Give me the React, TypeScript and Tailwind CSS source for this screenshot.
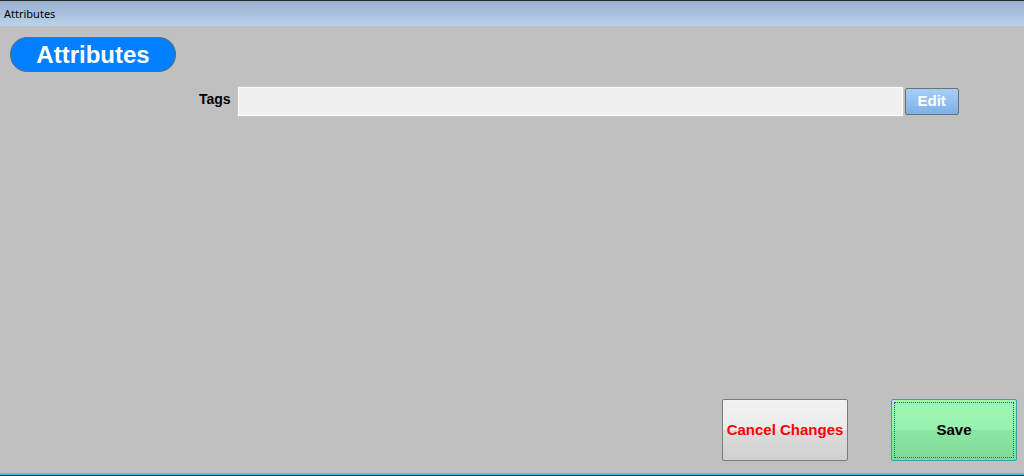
export default function App() {
  return (
    <div className="w-[1024px] h-[476px] flex flex-col bg-[#c0c0c0] font-['Liberation_Sans',Arial,sans-serif] overflow-hidden">
      <div className="h-[26px] shrink-0 border-t border-[#2a2a2a] bg-gradient-to-b from-[#98b0cf] to-[#bcd3ed] flex items-center pl-[4px]">
        <span className="text-[11px] text-black font-['Noto_Sans',sans-serif] leading-none">Attributes</span>
      </div>

      <div className="flex-1 flex flex-col">
        <div className="pt-[11px] pl-[10px]">
          <div className="w-[166px] h-[35px] rounded-[17px] border border-[#6a6a6a] bg-[#0080ff] flex items-center justify-center">
            <span className="text-white font-bold text-[24px] leading-none">Attributes</span>
          </div>
        </div>

        <div className="flex items-center mt-[15px] pl-[199px]">
          <span className="text-[14px] font-bold text-black mr-[7px] -mt-[4px]">Tags</span>
          <div className="w-[665px] h-[29px] bg-[#f0f0f0] border border-[#fbfbfb] shadow-[0_0_0_1px_#c8c8c8]" />
          <button className="ml-[2px] w-[54px] h-[27px] rounded-[2px] border border-[#707070] bg-gradient-to-b from-[#a6d0fa] to-[#7eb0e6] text-white font-bold text-[15px] flex items-center justify-center">
            Edit
          </button>
        </div>

        <div className="flex-1" />

        <div className="flex justify-end pr-[7px] pb-[12px] gap-[43px]">
          <button className="w-[126px] h-[62px] rounded-[2px] border border-[#7a7a7a] bg-[linear-gradient(to_bottom,#f2f2f2_0%,#ebebeb_50%,#dddddd_50%,#d0d0d0_100%)] text-[#ff0000] font-bold text-[15px] flex items-center justify-center">
            Cancel Changes
          </button>
          <button className="w-[126px] h-[62px] rounded-[2px] border border-[#2fa7a7] bg-[linear-gradient(to_bottom,#a0f7b6_0%,#98f2af_50%,#8ae6a2_50%,#80dc98_100%)] p-[2px] text-black font-bold text-[15px]">
            <div className="w-full h-full border border-dotted border-[#a000ff] flex items-center justify-center">Save</div>
          </button>
        </div>
      </div>

      <div className="h-[2px] bg-[#3cc6e6] shrink-0" />
      <div className="h-[1px] bg-[#2a2a2a] shrink-0" />
    </div>
  );
}
